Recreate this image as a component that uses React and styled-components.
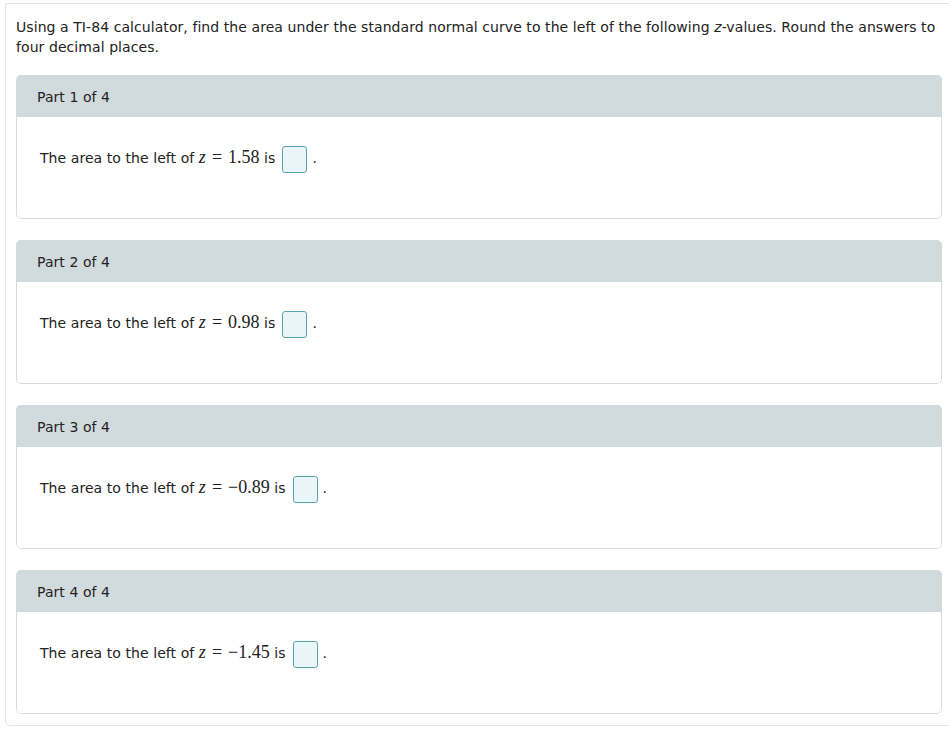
import React from 'react';
import styled, { createGlobalStyle } from 'styled-components';

const GlobalStyle = createGlobalStyle`
  html, body {
    margin: 0;
    padding: 0;
    background: #fff;
    overflow: hidden;
  }
  body {
    font-family: "DejaVu Sans", Verdana, sans-serif;
    letter-spacing: 0.07px;
    color: #222;
  }
`;

const Sheet = styled.div`
  box-sizing: border-box;
  width: 960px;
  margin: 3px 0 0 5px;
  padding: 13px 10px 11px 10px;
  border: 1px solid #e3e6e8;
  border-radius: 0 0 0 5px;
`;

const Intro = styled.p`
  margin: 0 0 18px 0;
  width: 926px;
  font-size: 14px;
  line-height: 20px;
`;

const ZVar = styled.i`
  font-style: italic;
`;

const PartList = styled.div`
  display: flex;
  flex-direction: column;
  gap: 21px;
  width: 926px;
`;

const Card = styled.section`
  display: flex;
  flex-direction: column;
  border-radius: 5px;
  overflow: hidden;
`;

const CardHeader = styled.div`
  height: 42px;
  box-sizing: border-box;
  display: flex;
  align-items: center;
  padding: 2px 0 0 21px;
  background: #d1dadd;
  font-size: 14px;
`;

const CardBody = styled.div`
  height: 102px;
  box-sizing: border-box;
  padding: 28px 0 0 23px;
  border: 1px solid #d5dcdf;
  border-top: none;
  border-radius: 0 0 5px 5px;
  font-size: 14px;
  line-height: 24px;
`;

const Math = styled.span`
  font-family: "Liberation Serif", "Times New Roman", serif;
  font-size: 18px;
  letter-spacing: 0;
  color: #222;
`;

const Eq = styled.span`
  margin: 0 6px;
`;

const AnswerBox = styled.span`
  display: inline-block;
  box-sizing: border-box;
  width: 25px;
  height: 27px;
  margin: 0 5px 0 7px;
  vertical-align: middle;
  border: 1px solid #5ba3b0;
  border-radius: 3px;
  background: #e9f5f9;
`;

const parts = ['1.58', '0.98', '\u22120.89', '\u22121.45'];

function App() {
  return (
    <>
      <GlobalStyle />
      <Sheet>
        <Intro>
          Using a TI-84 calculator, find the area under the standard normal curve to the left of the following <ZVar>z</ZVar>-values. Round the answers to four decimal places.
        </Intro>
        <PartList>
          {parts.map((value, i) => (
            <Card key={i}>
              <CardHeader>Part {i + 1} of 4</CardHeader>
              <CardBody>
                The area to the left of{' '}
                <Math>
                  <ZVar>z</ZVar>
                  <Eq>=</Eq>
                  {value}
                </Math>{' '}
                is
                <AnswerBox />.
              </CardBody>
            </Card>
          ))}
        </PartList>
      </Sheet>
    </>
  );
}

export default App;
